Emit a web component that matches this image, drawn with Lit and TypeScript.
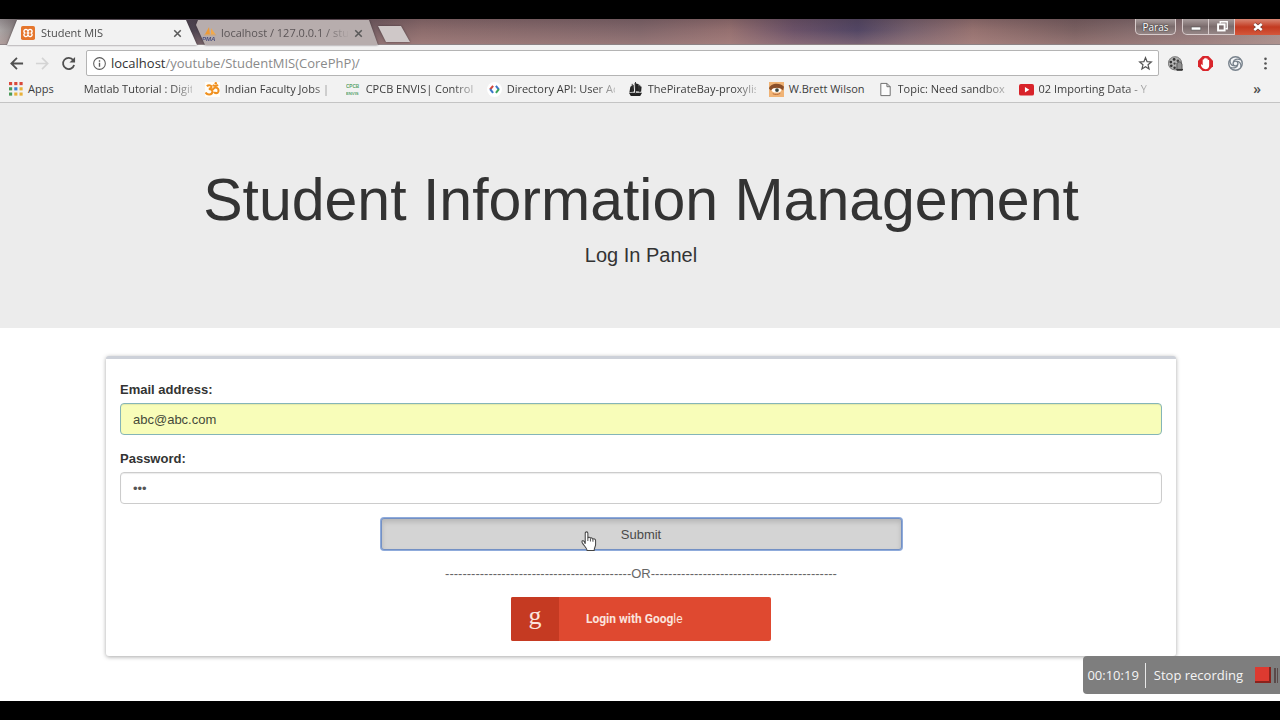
import { LitElement, html, css, svg, nothing } from "lit";
import { customElement, property } from "lit/decorators.js";

const uiFont = css`"Open Sans", "Noto Sans", sans-serif`;

const icons: Record<string, unknown> = {
  xampp: svg`<rect width="16" height="16" rx="2" fill="#e5762d"/><path d="M4.600 4.200c2-1 3 .6 3.400 1.800.4-1.200 1.400-2.800 3.400-1.800s1.400 3 .2 3.800c1.200.8 1.800 2.800-.2 3.800s-3-.6-3.400-1.800c-.4 1.200-1.400 2.800-3.400 1.800s-1.400-3-.2-3.800C3.200 7.200 2.600 5.200 4.600 4.200zM6.500 8h3" fill="none" stroke="#fff" stroke-width="1.600"/>`,
  pma: svg`<path d="M7.500 1 3 9h5.500z" fill="#ee9a34"/><path d="M9.500 2 14.500 9h-5z" fill="#f2a94a"/><path d="M2 9.500h13" stroke="#d8a468"/><text x="0" y="15.500" font-family="Liberation Sans" font-weight="700" font-style="italic" font-size="6.500" fill="#4a4f7c">PMA</text>`,
  apps: svg`${[
    ["#d9483b", 0, 0], ["#d9483b", 6, 0], ["#d9483b", 12, 0],
    ["#4a9a58", 0, 6], ["#3f7fd0", 6, 6], ["#e8b13a", 12, 6],
    ["#4a9a58", 0, 12], ["#e8b13a", 6, 12], ["#e8b13a", 12, 12],
  ].map(([c, x, y]) => svg`<rect x=${x} y=${y} width="3.600" height="3.600" fill=${c}/>`)}`,
  blank: nothing,
  om: svg`<rect width="16" height="16" fill="#fffdf8"/><path d="M2 4.500c2-2 5.500-.8 4.800 1.200C6.500 7 5 7.300 4 7.300c2 0 4.200.9 3.900 3.200-.4 3.500-5.700 4-7.200.7M7.500 8.500c1.500-.8 2-2.700 3.800-2.700 2.200 0 3.600 2.200 2.900 4.400-.8 2.200-3.800 2.200-4.400.3M8.500 3c1 1.800 3.600 1.800 5.200-.3" fill="none" stroke="#f0901e" stroke-width="2.200"/><circle cx="11.500" cy="1.400" r="1.300" fill="#f0901e"/>`,
  cpcb: svg`<text x="0" y="6.500" font-family="Liberation Sans" font-weight="700" font-size="5" fill="#5aa46c">CPCB</text><text x="0" y="13.500" font-family="Liberation Sans" font-weight="700" font-size="4.500" fill="#5aa46c">ENVIS</text>`,
  dev: svg`<circle cx="8" cy="8" r="8" fill="#fff"/><path d="M6.500 4.200 3.300 8" fill="none" stroke="#d5473c" stroke-width="2.200"/><path d="M3.300 7.500 6.500 11.700" stroke="#3d78c9" stroke-width="2.200"/><path d="m9.500 4.200 3.200 4" stroke="#3d78c9" stroke-width="2.200"/><path d="M12.700 7.700 9.500 11.700" stroke="#3ba55a" stroke-width="2.200"/>`,
  ship: svg`<path d="M1 11.500h14l-2 3.500H3zM2.500 5l3.500-2 .5 7-5 1zM7 1l4.500 1.500-.5 7.500-3.500-.2zM11.500 4l3 1-.5 5.500-3-.3z" fill="#222"/><path d="M8 0v13M4.500 2v9M12.500 3v8" stroke="#333"/>`,
  face: svg`<rect width="16" height="16" fill="#f0b375"/><path d="M0 7C1 1 12 0 16 5l-1 4C12 5 5 5 2 9z" fill="#8a4f2a"/><ellipse cx="8" cy="8.800" rx="5" ry="2.500" fill="#fff"/><circle cx="8.500" cy="8.600" r="2" fill="#3a4640"/><path d="M4 12.500c2.500 1.200 6 1 8-.4" stroke="#b4683a" fill="none"/>`,
  page: svg`<path d="M3 1.500h6.500L13 5v9.500H3zM9.500 1.500V5H13" fill="#fcfcfc" stroke="#6a6a6a"/>`,
  youtube: svg`<rect y="2" width="16" height="12.500" rx="2" fill="#d8232a"/><path d="m6.300 5.300 4.700 2.900-4.700 2.900z" fill="#fff"/>`,
  back: svg`<path d="M15 8H3M8.500 2 2.500 8l6 6" fill="none" stroke="#505050" stroke-width="1.900"/>`,
  forward: svg`<path d="M1 8h12M7.500 2l6 6-6 6" fill="none" stroke="#d4d4d4" stroke-width="1.800"/>`,
  reload: svg`<path d="M13 4.300A6 6 0 1 0 14 9.500" fill="none" stroke="#505050" stroke-width="1.900"/><path d="M15 1v6H9z" fill="#505050"/>`,
  info: svg`<circle cx="8" cy="8" r="7.200" fill="none" stroke="#5a5a5a" stroke-width="1.300"/><path d="M8 7v5M8 4v1.700" stroke="#5a5a5a" stroke-width="1.700"/>`,
  star: svg`<path d="m8 1.800 1.700 4.300 4.500.3-3.500 3 1.100 4.500L8 11.500l-3.800 2.400 1.100-4.500-3.500-3 4.500-.3z" fill="none" stroke="#555" stroke-width="1.300"/>`,
  film: svg`<circle cx="7.500" cy="7.800" r="7.500" fill="#b5b5b5"/><circle cx="7.500" cy="7.800" r="7" fill="none" stroke="#777"/><circle cx="6.500" cy="3.600" r="1.500" fill="#333"/><circle cx="3" cy="6.500" r="1.400" fill="#333"/><circle cx="10.500" cy="5" r="1.400" fill="#444"/><circle cx="3.500" cy="10.500" r="1.400" fill="#333"/><circle cx="7" cy="12.500" r="1.300" fill="#333"/><circle cx="7" cy="8" r="1.200" fill="#444"/><path d="M9.500 7.500 13 6l2 3v6.500H9.500z" fill="#8f8f8f" stroke="#444" stroke-width=".8"/><path d="M9 14.500h7" stroke="#333" stroke-width="1.400"/>`,
  hand: svg`<path d="M5 0h6l5 5v6l-5 5H5l-5-5V5z" fill="#d9252b"/><path d="M3.300 8.500 5 9.800V4.300c0-1 1.300-1 1.300 0V3.200c0-1 1.400-1 1.400 0v-.5c0-1 1.400-1 1.400 0v.7c0-1 1.300-1 1.300 0v1.400c0-1 1.500-1 1.500 0V10c0 2.500-1.500 4-4 4-2.300 0-3.300-1.300-4.600-3.500z" fill="#fff"/>`,
  swirl: svg`<circle cx="8" cy="8" r="7.200" fill="#f4f5f7" stroke="#78828c" stroke-width="1.500"/><circle cx="8" cy="8" r="2.600" fill="none" stroke="#78828c" stroke-width="1.400"/><path d="M5.800 6.500C6 3.500 10 2.500 13.500 4M9.500 5.800c2.700-.3 4.800 2.700 4.300 6M10.200 9.500C10 12.500 6 13.500 2.500 12M6.500 10.200C3.800 10.500 1.700 7.500 2.200 4.200" fill="none" stroke="#78828c" stroke-width="1.400"/>`,
  menu: svg`<circle cx="8" cy="3" r="1.400" fill="#555"/><circle cx="8" cy="8" r="1.400" fill="#555"/><circle cx="8" cy="13" r="1.400" fill="#555"/>`,
  close: svg`<path d="m4 4 8 8m0-8-8 8" stroke="#5a5a5a" stroke-width="1.900"/>`,
  minimize: svg`<rect x="2.500" y="8" width="11" height="3.500" fill="#fff" stroke="#555" stroke-width=".7"/>`,
  restore: svg`<path d="M6 4V2h8v8h-2" fill="none" stroke="#fff" stroke-width="1.500"/><rect x="3.500" y="5" width="7.500" height="7" fill="none" stroke="#fff" stroke-width="2.200"/>`,
  exit: svg`<path d="m3 4 10 8m0-8-10 8" stroke="#6d3a32" stroke-width="5"/><path d="m3 4 10 8m0-8-10 8" stroke="#fff" stroke-width="3.400"/>`,
};

const icon = (name: string, size = 15) =>
  html`<svg viewBox="0 0 16 16" width=${size} height=${size} aria-hidden="true">${icons[name]}</svg>`;

const bookmarks = [
  { icon: "blank", label: "Matlab Tutorial : Digit" },
  { icon: "om", label: "Indian Faculty Jobs | I" },
  { icon: "cpcb", label: "CPCB ENVIS| Control" },
  { icon: "dev", label: "Directory API: User Ac" },
  { icon: "ship", label: "ThePirateBay-proxylis" },
  { icon: "face", label: "W.Brett Wilson" },
  { icon: "page", label: "Topic: Need sandbox" },
  { icon: "youtube", label: "02 Importing Data - Y" },
];

@customElement("browser-chrome")
export class BrowserChrome extends LitElement {
  @property() site = "localhost";
  @property() path = "/youtube/StudentMIS(CorePhP)/";

  static styles = css`
    :host { display: block; font-family: ${uiFont}; font-size: 11px; color: #4c4c4c; }
    svg { display: block; flex: none; }
    button { font: inherit; color: inherit; border: 0; padding: 0; margin: 0; background: none; }
    a { color: inherit; text-decoration: none; }
    .titlebar {
      display: flex; height: 26px; border-bottom: 1px solid #8d8284; box-sizing: border-box;
      background:
        linear-gradient(to bottom, rgba(60, 45, 55, .25), transparent 45%, rgba(190, 150, 145, .35)),
        linear-gradient(to right, #aaa5a5 0, #8f8888 1%, #4d4450 15%, #6f5a60 28%, #8c6c6c 33%, #80666a 50%, #957070 57%, #6b5268 62%, #524664 67%, #76606d 71%, #967270 76%, #7a6061 84%, #91797a 94%, #a5908d 100%);
    }
    .tabs { display: flex; padding-left: 7px; filter: drop-shadow(0 0 1px rgba(50, 40, 45, .7)); }
    .tab { display: flex; align-items: center; box-sizing: border-box; height: 26px; width: 190px; padding: 2px 13px 0 14px; clip-path: polygon(10px 1px, 179px 1px, 100% 100%, 0 100%); }
    .tab.active { background: #f2f2f2; }
    .tab.idle { background: #b7adad; width: 183px; margin-left: -2px; padding: 2px 13px 0 7px; clip-path: polygon(3px 1px, 174px 1px, 100% 100%, 10px 100%, 1px 6px); color: #5b5557; }
    .tab .name { flex: 1; margin-left: 6px; white-space: nowrap; line-height: 18px; }
    .tab.idle .name { margin-left: 4px; mask-image: linear-gradient(to right, #000 78%, transparent 98%); }
    .new { width: 32px; height: 16px; margin: 7px 0 0; background: #cfc8c8; clip-path: polygon(0 0, 23px 0, 100% 100%, 8px 100%); }
    .controls { display: flex; margin-left: auto; align-items: flex-start; color: #fff; }
    .controls button { height: 16px; display: grid; place-items: center; box-sizing: border-box; border: 1px solid #d8cccc; border-top: 0; background: linear-gradient(#a99d9d, #7b6c6d 50%, #968787); }
    .controls .user { width: 41px; margin-right: 6px; border-radius: 0 0 5px 5px; font-size: 10px; line-height: 14px; text-shadow: 0 0 2px #333, 0 0 1px #333; }
    .controls .min { width: 27px; border-radius: 0 0 0 5px; }
    .controls .max { width: 26px; border-left: 0; }
    .controls .exit { width: 45px; border: 0; background: linear-gradient(#d98774, #c33a20 50%, #d4573b); }
    .bar { background: #f2f2f2; border-bottom: 1px solid #c4c4c4; height: 57px; }
    .nav { display: flex; align-items: center; padding: 5px 7px 0 9px; }
    .steer { display: flex; gap: 11px; margin-right: 10px; }
    .address { flex: 1; display: flex; align-items: center; gap: 5px; height: 26px; box-sizing: border-box; border: 1px solid #b4b4b4; border-radius: 2px; background: #fff; padding: 0 5px 0 6px; font-size: 13px; }
    .url { flex: 1; color: #8a8a8a; white-space: nowrap; line-height: 20px; }
    .url b { font-weight: 400; color: #333; }
    .tools { display: flex; gap: 15px; margin-left: 9px; }
    .marks { display: flex; align-items: center; padding: 2px 19px 0 9px; height: 22px; }
    .mark { display: flex; align-items: center; gap: 5px; margin-right: 13px; line-height: 18px; }
    .mark.apps { margin-right: 10px; }
    .mark span { white-space: nowrap; color: #3c3c3c; }
    .mark.long span { width: 108px; }
    .mark.fade span { mask-image: linear-gradient(to right, #000 80%, transparent 108%); }
    .more { margin-left: auto; font-weight: 600; font-size: 14px; line-height: 18px; }
  `;

  render() {
    return html`
      <div class="titlebar">
        <div class="tabs">
          <div class="tab active">${icon("xampp", 14)}<span class="name">Student MIS</span><button aria-label="Close tab">${icon("close", 13)}</button></div>
          <div class="tab idle">${icon("pma", 15)}<span class="name">localhost / 127.0.0.1 / stu</span><button aria-label="Close tab">${icon("close", 13)}</button></div>
          <button class="new" aria-label="New tab"></button>
        </div>
        <div class="controls">
          <button class="user">Paras</button>
          <button class="min" aria-label="Minimize">${icon("minimize", 14)}</button>
          <button class="max" aria-label="Restore">${icon("restore", 14)}</button>
          <button class="exit" aria-label="Close">${icon("exit", 12)}</button>
        </div>
      </div>
      <div class="bar">
        <div class="nav">
          <div class="steer">
            <button aria-label="Back">${icon("back")}</button>
            <button aria-label="Forward">${icon("forward")}</button>
            <button aria-label="Reload">${icon("reload")}</button>
          </div>
          <div class="address">
            ${icon("info", 13)}
            <span class="url"><b>${this.site}</b>${this.path}</span>
            <button aria-label="Bookmark this page">${icon("star")}</button>
          </div>
          <div class="tools">
            ${["film", "hand", "swirl", "menu"].map((n) => html`<button aria-label=${n}>${icon(n)}</button>`)}
          </div>
        </div>
        <nav class="marks">
          <a class="mark apps" href="#">${icon("apps", 14)}<span>Apps</span></a>
          ${bookmarks.map((b) => html`<a class="mark ${b.icon === "face" ? "" : "long fade"}" href="#">${icon(b.icon)}<span>${b.label}</span></a>`)}
          <button class="more" aria-label="More bookmarks">»</button>
        </nav>
      </div>
    `;
  }
}

@customElement("login-panel")
export class LoginPanel extends LitElement {
  static styles = css`
    :host { display: block; }
    .card { display: flex; flex-direction: column; gap: 14px; padding: 21px 14px 15px; border-top: 3px solid #cdd1d9; border-radius: 3px; background: #fff; box-shadow: 0 1px 4px rgba(0, 0, 0, .35); font-size: 13px; color: #333; }
    .field { display: flex; flex-direction: column; gap: 3px; }
    label { font-weight: 700; line-height: 20px; }
    input { height: 32px; box-sizing: border-box; width: 100%; border: 1px solid #ccc; border-radius: 4px; padding: 0 12px; font: inherit; color: #555; background: #fff; outline: 0; box-shadow: inset 0 1px 1px rgba(0, 0, 0, .08); }
    .filled { background: #f8fdb9; border-color: #84b5b8; color: #454a3a; }
    .submit { position: relative; align-self: center; width: 50%; height: 32px; box-sizing: border-box; border: 1px solid #7390c4; border-radius: 3px; background: #d4d4d4; box-shadow: 0 0 0 1px #8fabdb, inset 0 3px 5px rgba(0, 0, 0, .14); font: inherit; color: #4a4a4a; padding: 0; }
    .pointer { position: absolute; left: 38%; top: 12px; margin-left: 2px; }
    .or { text-align: center; line-height: 19px; color: #666; }
    .google { align-self: center; display: flex; align-items: center; width: 260px; height: 44px; border-radius: 2px; overflow: hidden; background: #df4930; color: #fbe3dc; text-decoration: none; font: 700 12px/18px Roboto, sans-serif; }
    .g { width: 48px; line-height: 38px; height: 44px; text-align: center; background: #c53a22; margin-right: 27px; font-family: "Liberation Serif", serif; font-weight: 400; font-size: 26px; }
    .dim { font-weight: 400; }
  `;

  render() {
    const dashes = "-".repeat(43);
    return html`
      <form class="card" @submit=${(e: Event) => e.preventDefault()}>
        <div class="field">
          <label for="email">Email address:</label>
          <input class="filled" id="email" type="email" value="abc@abc.com" />
        </div>
        <div class="field">
          <label for="pwd">Password:</label>
          <input id="pwd" type="password" value="abc" />
        </div>
        <button class="submit" type="submit">Submit
          <svg class="pointer" width="16" height="21" viewBox="0 0 17 22" aria-hidden="true">
            <path d="M4.500 13.500V2.200C4.500.3 7.300.3 7.300 2.200V7.500C7.500 6 10 6.200 10 7.800 10.500 6.700 12.700 7 12.700 8.600 13.500 7.800 15.500 8.200 15.500 10V14.500C15.500 16.500 14 17.500 14 20.500H6.500C6 17.500 3 15.500 1.200 12 .4 10.300 2.400 9.500 3.400 10.900z" fill="#fff" stroke="#444" stroke-width="1.100"/>
            <path d="M7.300 7v3.500M10 8v3M12.700 8.800v2.500" stroke="#444"/>
          </svg>
        </button>
        <div class="or">${dashes}OR${dashes}</div>
        <a class="google" href="#"><span class="g" aria-hidden="true">g</span><span>Login with Goog<span class="dim">le</span></span></a>
      </form>
    `;
  }
}

@customElement("recorder-bar")
export class RecorderBar extends LitElement {
  static styles = css`
    :host { display: flex; align-items: center; gap: 8px; height: 38px; box-sizing: border-box; padding: 0 2px 0 4px; border-radius: 4px 0 0 4px; background: #7e7e7e; color: #f4f4f4; font: 13px/20px ${uiFont}; white-space: nowrap; }
    .time { padding-right: 6px; border-right: 1px solid #e8e8e8; line-height: 25px; }
    button { display: flex; align-items: center; gap: 12px; border: 0; padding: 0; background: none; color: inherit; font: inherit; }
    .stop { width: 14px; height: 14px; background: #dd3a30; border-right: 2px solid #8b231d; border-bottom: 2px solid #8b231d; }
    .grip { width: 1px; height: 15px; margin-left: -9px; border-left: 2px solid #5a4a4a; border-right: 1px solid #5a4a4a; }
  `;

  render() {
    return html`
      <span class="time">00:10:19</span>
      <button>Stop recording <span class="stop"></span><span class="grip"></span></button>
    `;
  }
}

@customElement("app-root")
export class AppRoot extends LitElement {
  static styles = css`
    :host { display: flex; flex-direction: column; min-height: 100vh; box-sizing: border-box; border-top: 19px solid #000; border-bottom: 19px solid #000; background: #fff; font-family: "Liberation Sans", Arial, sans-serif; }
    .hero { padding: 64px 16px 60px 18px; background: #ececec; color: #333; text-align: center; }
    h1 { margin: 0; font-size: 59px; line-height: 66px; font-weight: 400; }
    .hero p { margin: 10px 0 0; font-size: 20px; line-height: 25px; }
    main { position: relative; flex: 1; padding: 28px 104px 45px 106px; }
    .recorder { position: absolute; right: 0; bottom: 7px; }
  `;

  render() {
    return html`
      <browser-chrome></browser-chrome>
      <header class="hero">
        <h1>Student Information Management</h1>
        <p>Log In Panel</p>
      </header>
      <main>
        <login-panel></login-panel>
        <recorder-bar class="recorder"></recorder-bar>
      </main>
    `;
  }
}
